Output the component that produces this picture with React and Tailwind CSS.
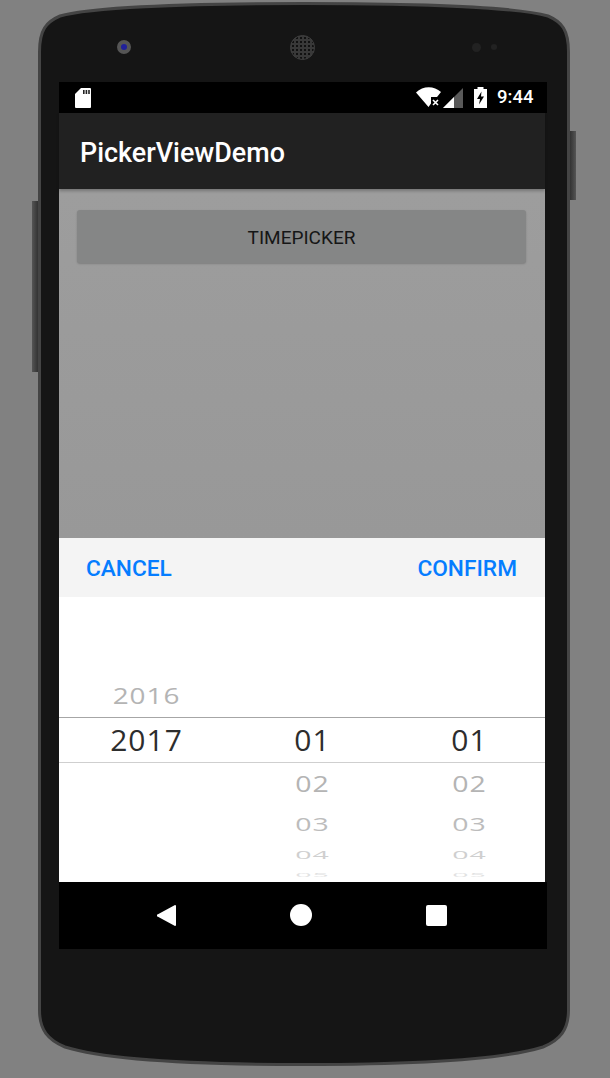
const years = { label: "2016", cls: "text-[#b4b4b4] scale-x-[0.93] scale-y-[0.75]" };

const belowRows = [
    { h: "h-[41px]", cls: "text-[#b4b4b4] scale-x-[0.95] scale-y-[0.72]", text: "02" },
    { h: "h-[39px]", cls: "text-[#bcbcbc] scale-x-[0.95] scale-y-[0.62]", text: "03" },
    { h: "h-[23px]", cls: "text-[#cfcfcf] scale-x-[0.95] scale-y-[0.38]", text: "04" },
    { h: "h-[17px]", cls: "text-[#e2e2e2] scale-x-[0.95] scale-y-[0.2]", text: "05" },
];

const wheelFont = "font-['Open_Sans',sans-serif] text-[30px] leading-none tracking-[1px]";

function PhoneBody() {
    return (
        <svg className="absolute inset-0" width="532" height="1064" viewBox="0 0 532 1064">
            <path
                d="M1.5 50 C1.5 28 8 20 22 14 C50 6 140 1.5 266 1.5 C392 1.5 482 6 510 14 C524 20 530.5 28 530.5 50 L530.5 1008 C530.5 1028 522 1038 505 1045 C470 1056 390 1062.5 266 1062.5 C142 1062.5 62 1056 27 1045 C10 1038 1.5 1028 1.5 1008 Z"
                fill="#151515"
                stroke="#444444"
                strokeWidth="3"
            />
        </svg>
    );
}

function SdIcon() {
    return (
        <svg width="16" height="20" viewBox="0 0 16 20">
            <path d="M6 0 H15 a1 1 0 0 1 1 1 V19 a1 1 0 0 1 -1 1 H1 a1 1 0 0 1 -1 -1 V6 Z" fill="#fff" />
            <path d="M8 2 h1.6 v4 H8 Z M10.6 2 h1.6 v4 h-1.6 Z M13.2 2 h1.6 v4 h-1.6 Z" fill="#222" />
        </svg>
    );
}

function StatusIcons() {
    return (
        <div className="flex items-center">
            <svg width="26" height="21" viewBox="0 0 26 21" className="mr-px">
                <path d="M0 5.5 C7 -1.5 18 -1.5 25 5 L21 10 H15 V16.5 L12.5 20 Z" fill="#fff" />
                <path d="M17 13 l5 5 M22 13 l-5 5" stroke="#fff" strokeWidth="1.6" />
            </svg>
            <svg width="20" height="20" viewBox="0 0 20 20">
                <path d="M0 20 L20 0 V20 Z" fill="#5a5a5a" />
                <path d="M0 20 L11 9 V20 Z" fill="#fff" />
            </svg>
            <svg width="13" height="21" viewBox="0 0 13 21" className="ml-[11px]">
                <path d="M3.5 0 H9.5 V2 H13 V21 H0 V2 H3.5 Z" fill="#fff" />
                <path d="M7.5 4.5 L3 12 H6 L5 17.5 L10 9.5 H7 Z" fill="#000" />
            </svg>
            <span className="ml-[10px] w-[38px] font-['Roboto',sans-serif] font-medium text-[18.5px] leading-none text-white">9:44</span>
        </div>
    );
}

function Speaker() {
    return (
        <div className="w-[25px] h-[25px] rounded-full border border-[#3e3e3e] bg-[#353535] bg-[radial-gradient(#111111_1.2px,#383838_1.4px)] bg-[length:4px_4px]" />
    );
}

function Header() {
    return (
        <div className="h-[59px] bg-[#f4f4f4] flex items-center justify-between pl-[27px] pr-[28px] pt-[3px] font-['Roboto',sans-serif] font-medium text-[22.7px] text-[#057dff]">
            <span>CANCEL</span>
            <span>CONFIRM</span>
        </div>
    );
}

function Wheel() {
    return (
        <div className="h-[285px] bg-white overflow-hidden">
            <div className="h-[120px] grid grid-cols-[175px_157px_154px] items-end">
                <div className={`h-[36px] mb-[3px] flex items-center justify-center ${wheelFont} ${years.cls}`}>
                    {years.label}
                </div>
            </div>
            <div className="h-[46px] pb-[1px] border-t border-t-[#a6a6a6] border-b border-b-[#cfcfcf] grid grid-cols-[175px_157px_157px] items-center text-center text-[#2d2d2d]">
                <div className={wheelFont}>2017</div>
                <div className={wheelFont}>01</div>
                <div className={wheelFont}>01</div>
            </div>
            <div className="grid grid-cols-[175px_157px_157px]">
                <div />
                {[0, 1].map((col) => (
                    <div key={col}>
                        {belowRows.map((row) => (
                            <div key={row.text} className={`${row.h} flex items-center justify-center ${wheelFont} ${row.cls}`}>
                                {row.text}
                            </div>
                        ))}
                    </div>
                ))}
            </div>
        </div>
    );
}

function Screen() {
    return (
        <div className="w-[486px]">
            <div className="h-[76px] bg-[#212121] flex items-center pl-[21px] pt-[4px] font-['Roboto',sans-serif] font-medium text-[26.9px] text-white shadow-[0_2px_3px_rgba(0,0,0,0.25)] relative">
                PickerViewDemo
            </div>
            <div className="h-[349px] bg-gradient-to-b from-[#9d9d9d] to-[#989898] px-[18px] pt-[21px]">
                <div className="h-[53px] w-[449px] pt-[3px] rounded-[3px] bg-[#858686] shadow-[0_1px_2px_rgba(0,0,0,0.2)] flex items-center justify-center font-['Roboto',sans-serif] text-[19px] text-[#161616]">
                    TIMEPICKER
                </div>
            </div>
            <Header />
            <Wheel />
        </div>
    );
}

export default function App() {
    return (
        <div className="w-[610px] h-[1078px] bg-[#818181] overflow-hidden pt-[2px] pl-[38px]">
            <div className="relative w-[532px] h-[1064px]">
                <div className="absolute left-[-6px] top-[199px] w-[6px] h-[171px] bg-gradient-to-r from-[#555555] to-[#333333]" />
                <div className="absolute right-[-6px] top-[129px] w-[6px] h-[69px] bg-gradient-to-l from-[#555555] to-[#333333]" />
                <PhoneBody />
                <div className="relative pl-[21px]">
                    <div className="h-[80px] flex items-center pt-[10px]">
                        <div className="ml-[58px] w-[14px] h-[14px] rounded-full bg-[#20209a] border-[4px] border-[#555555]" />
                        <div className="ml-[159px]"><Speaker /></div>
                        <div className="ml-[157px] w-[9px] h-[9px] rounded-full bg-[#222222]" />
                        <div className="ml-[10px] w-[6px] h-[6px] rounded-full bg-[#222222]" />
                    </div>
                    <div className="w-[488px] h-[31px] bg-black flex items-center justify-between pl-[16px] pr-[12px]">
                        <SdIcon />
                        <StatusIcons />
                    </div>
                    <Screen />
                    <div className="w-[488px] h-[67px] bg-black flex items-center pl-[98px] pb-[1px] gap-[114px]">
                        <svg width="19" height="23" viewBox="0 0 19 23">
                            <path d="M18 1 a1 1 0 0 1 1 1 V21 a1 1 0 0 1 -1 1 L0.5 12.5 a1 1 0 0 1 0 -2 Z" fill="#fff" />
                        </svg>
                        <div className="w-[22px] h-[22px] rounded-full bg-white" />
                        <div className="w-[21px] h-[21px] rounded-[2px] bg-white" />
                    </div>
                </div>
            </div>
        </div>
    );
}
